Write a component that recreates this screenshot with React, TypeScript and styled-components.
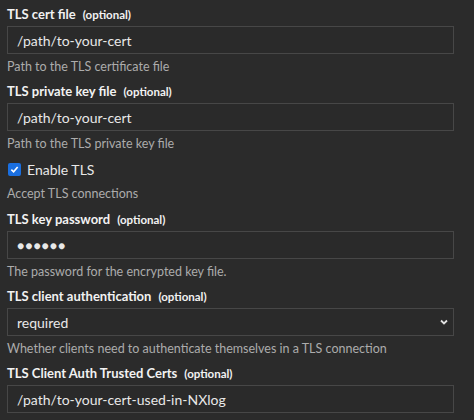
import React from "react";
import styled, { createGlobalStyle } from "styled-components";

const Global = createGlobalStyle`
  html, body { margin: 0; padding: 0; background: #2b2b2b; }
  body { font-family: Lato, "Open Sans", sans-serif; color: #e6e6e6; }
  * { box-sizing: border-box; }
`;

const Form = styled.div`
  display: flex;
  flex-direction: column;
  padding: 4px 20px 0 7px;
  width: 474px;
`;

const Field = styled.div<{ $extra?: number }>`
  display: flex;
  flex-direction: column;
  margin-bottom: ${(p) => 4 + (p.$extra ?? 0)}px;
`;

const Label = styled.div`
  font-weight: 700;
  font-size: 13px;
  line-height: 20px;
  height: 20px;
  margin-bottom: 2px;
  color: #f2f2f2;
  white-space: nowrap;
`;

const Optional = styled.span`
  font-size: 11.5px;
  margin-left: 7px;
  font-weight: 700;
`;

const Input = styled.div<{ $select?: boolean }>`
  height: 28px;
  border: 1px solid #474747;
  background: #2a2a2a;
  display: flex;
  align-items: center;
  padding: 0 ${(p) => (p.$select ? 4 : 9)}px 0 9px;
  font-size: 14px;
  color: #e8e8e8;
  justify-content: space-between;
`;

const Dots = styled.span`
  letter-spacing: 1px;
  font-size: 12px;
`;

const Help = styled.div`
  font-size: 12.5px;
  line-height: 20px;
  margin-top: 3px;
  color: #acacac;
  white-space: nowrap;
`;

const CheckRow = styled.label`
  display: flex;
  align-items: center;
  height: 23px;
  gap: 6px;
  font-size: 14px;
  color: #e8e8e8;
`;

const Box = styled.span`
  width: 13px;
  height: 13px;
  border-radius: 2px;
  background: #1a6fe0;
  display: inline-flex;
  align-items: center;
  justify-content: center;
  margin-left: 1px;
`;

const Chevron = () => (
  <svg width="10" height="8" viewBox="0 0 10 8">
    <path d="M2 2.5 L5 5.5 L8 2.5" stroke="#e0e0e0" strokeWidth="1.8" fill="none" />
  </svg>
);

function TextField({ label, value, help, select, dots }: { label: string; value: string; help?: string; select?: boolean; dots?: boolean }) {
  return (
    <Field>
      <Label>
        {label}
        <Optional>(optional)</Optional>
      </Label>
      <Input $select={select}>
        {dots ? <Dots>{value}</Dots> : <span>{value}</span>}
        {select && <Chevron />}
      </Input>
      {help && <Help>{help}</Help>}
    </Field>
  );
}

export default function App() {
  return (
    <>
      <Global />
      <Form>
        <TextField label="TLS cert file" value="/path/to-your-cert" help="Path to the TLS certificate file" />
        <TextField label="TLS private key file" value="/path/to-your-cert" help="Path to the TLS private key file" />
        <Field $extra={1}>
          <CheckRow>
            <Box>
              <svg width="9" height="9" viewBox="0 0 10 10">
                <path d="M1.5 5.2 L4 7.5 L8.5 2.3" stroke="#fff" strokeWidth="1.8" fill="none" />
              </svg>
            </Box>
            Enable TLS
          </CheckRow>
          <Help>Accept TLS connections</Help>
        </Field>
        <TextField label="TLS key password" value="●●●●●●" dots help="The password for the encrypted key file." />
        <TextField label="TLS client authentication" value="required" select help="Whether clients need to authenticate themselves in a TLS connection" />
        <TextField label="TLS Client Auth Trusted Certs" value="/path/to-your-cert-used-in-NXlog" />
      </Form>
    </>
  );
}
